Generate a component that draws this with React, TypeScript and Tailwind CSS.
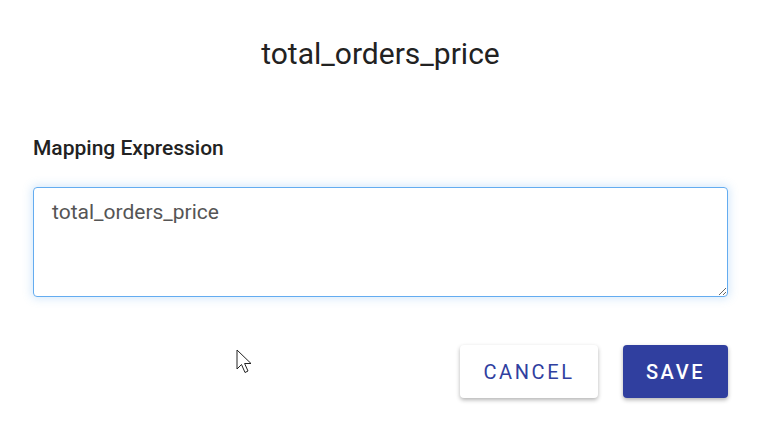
export default function App() {
  return (
    <div
      className="relative h-[424px] w-[760px] bg-white pl-[33px] pr-[32px] pt-[36px]"
      style={{ fontFamily: "Roboto, 'Liberation Sans', sans-serif" }}
    >
      <h2 className="text-center text-[30px] leading-[36px] font-normal text-[#222]">
        total_orders_price
      </h2>

      <label className="mt-[62px] block text-[21px] leading-[28px] font-medium text-[#222]">
        Mapping Expression
      </label>

      <textarea
        className="mt-[25px] block h-[110px] w-full resize-y rounded-[4px] border border-[#64acf0] px-[18px] py-[10px] text-[21px] leading-[28px] text-[#555] shadow-[0_0_8px_2px_rgba(100,170,240,0.25)] outline-none"
        defaultValue="total_orders_price"
      />

      <div className="mt-[48px] flex justify-end gap-[25px]">
        <button className="h-[53px] w-[138px] rounded-[4px] bg-white text-[20px] tracking-[0.13em] text-[#3040a0] shadow-[0_2px_4px_rgba(0,0,0,0.3)]">
          CANCEL
        </button>
        <button className="h-[53px] w-[105px] rounded-[4px] bg-[#303f9f] text-[20px] font-medium tracking-[0.13em] text-white shadow-[0_2px_4px_rgba(0,0,0,0.3)]">
          SAVE
        </button>
      </div>

      {/* mouse pointer */}
      <svg
        className="absolute left-[236px] top-[349px]"
        width="20"
        height="28"
        viewBox="0 0 20 28"
      >
        <path
          d="M1 1 L1 20 L5.5 15.5 L9 23.5 L12 22 L8.6 14.5 L15 14.5 Z"
          fill="white"
          stroke="#222"
          strokeWidth="1"
          strokeLinejoin="miter"
        />
      </svg>
    </div>
  );
}
